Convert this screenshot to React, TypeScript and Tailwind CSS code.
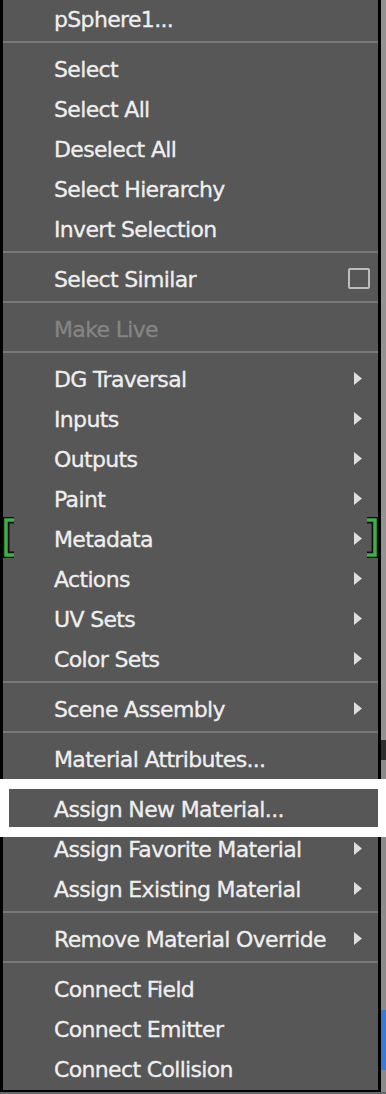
import React from 'react';

type Item =
  | { kind: 'item'; label: string; sub?: boolean; disabled?: boolean; check?: boolean }
  | { kind: 'divider' };

const items: Item[] = [
  { kind: 'item', label: 'pSphere1...' },
  { kind: 'divider' },
  { kind: 'item', label: 'Select' },
  { kind: 'item', label: 'Select All' },
  { kind: 'item', label: 'Deselect All' },
  { kind: 'item', label: 'Select Hierarchy' },
  { kind: 'item', label: 'Invert Selection' },
  { kind: 'divider' },
  { kind: 'item', label: 'Select Similar', check: true },
  { kind: 'divider' },
  { kind: 'item', label: 'Make Live', disabled: true },
  { kind: 'divider' },
  { kind: 'item', label: 'DG Traversal', sub: true },
  { kind: 'item', label: 'Inputs', sub: true },
  { kind: 'item', label: 'Outputs', sub: true },
  { kind: 'item', label: 'Paint', sub: true },
  { kind: 'item', label: 'Metadata', sub: true },
  { kind: 'item', label: 'Actions', sub: true },
  { kind: 'item', label: 'UV Sets', sub: true },
  { kind: 'item', label: 'Color Sets', sub: true },
  { kind: 'divider' },
  { kind: 'item', label: 'Scene Assembly', sub: true },
  { kind: 'divider' },
  { kind: 'item', label: 'Material Attributes...' },
  { kind: 'divider' },
  { kind: 'item', label: 'Assign New Material...' },
  { kind: 'item', label: 'Assign Favorite Material', sub: true },
  { kind: 'item', label: 'Assign Existing Material', sub: true },
  { kind: 'divider' },
  { kind: 'item', label: 'Remove Material Override', sub: true },
  { kind: 'divider' },
  { kind: 'item', label: 'Connect Field' },
  { kind: 'item', label: 'Connect Emitter' },
  { kind: 'item', label: 'Connect Collision' },
];

const Arrow = () => (
  <svg width="8" height="13" viewBox="0 0 8 13" className="mr-[16px] -mt-[4px]">
    <polygon points="0,0 8,6.5 0,13" fill="#dedede" />
  </svg>
);

// green selection bracket drawn over the menu
const Bracket = ({ flip }: { flip?: boolean }) => (
  <svg width="13" height="41" viewBox="0 0 13 41" className={flip ? '-scale-x-100' : ''}>
    <path d="M12 3 H4 V38 H12" fill="none" stroke="#111" strokeWidth="7" />
    <path d="M12 3 H4 V38 H12" fill="none" stroke="#3fae49" strokeWidth="3.5" />
  </svg>
);

const App = () => {
  return (
    <div className="relative w-[386px] h-[1094px] overflow-hidden bg-[#5e6d6b] font-['DejaVu_Sans',sans-serif]">
      <div className="flex">
        {/* Menu */}
        <div className="w-[381px] bg-[#575757] border-l-[3px] border-r-[3px] border-b-2 border-black">
          {items.map((it, i) =>
            it.kind === 'divider' ? (
              <div key={i} className="h-[10px] pt-[1px]">
                <div className="h-[2px] bg-[#777777]" />
              </div>
            ) : (
              <div key={i} className="h-[40px] flex items-center justify-between pl-[51px]">
                <span
                  className={`text-[22px] tracking-[-0.03em] leading-none [-webkit-text-stroke:0.3px_currentColor] ${
                    it.disabled ? 'text-[#858585]' : 'text-[#efefef]'
                  }`}
                >
                  {it.label}
                </span>
                {it.sub && <Arrow />}
                {it.check && (
                  <div className="w-[22px] h-[21px] mr-[8px] -mt-[3px] border-2 border-[#bdbdbd] rounded-[2px]" />
                )}
              </div>
            )
          )}
        </div>
        {/* Viewport strip */}
        <div className="flex-1 flex flex-col">
          <div className="h-[740px] bg-[#929292]" />
          <div className="h-[20px] bg-[#2e2e2e]" />
          <div className="h-[250px] bg-[#8a8a8a]" />
          <div className="h-[60px] bg-[#3a7bd5]" />
          <div className="flex-1 bg-[#8a8a8a]" />
        </div>
      </div>

      {/* Highlight frame around Assign New Material */}
      <div className="absolute left-0 top-[779px] w-[386px] h-[58px] border-t-[10px] border-b-[10px] border-l-[9px] border-r-[8px] border-white" />

      {/* Green brackets around Metadata */}
      <div className="absolute left-[2px] top-[517px]">
        <Bracket />
      </div>
      <div className="absolute left-[366px] top-[517px]">
        <Bracket flip />
      </div>
    </div>
  );
};

export default App;
